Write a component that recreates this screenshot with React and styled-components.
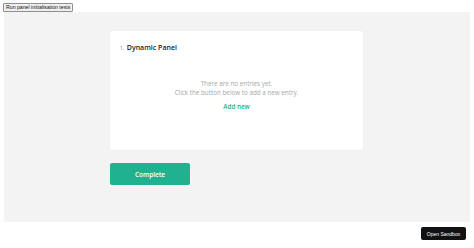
import React from 'react'
import styled, { createGlobalStyle } from 'styled-components'

const GlobalStyle = createGlobalStyle`
    html, body { margin: 0; padding: 0; background: #fff; }
    body { font-family: "Open Sans", "Noto Sans", sans-serif; }
`

const Page = styled.div`
    width: 474px;
    height: 248px;
    padding: 3px 4px 0 4px;
    box-sizing: border-box;
    display: flex;
    flex-direction: column;
`
const TestButton = styled.button`
    align-self: flex-start;
    height: 9px;
    margin: 0 0 0 -1px;
    padding: 0 2px;
    font-family: "Liberation Sans", Arial, sans-serif;
    font-size: 5.2px;
    line-height: 7px;
    color: #111;
    background: #efefef;
    border: 1px solid #8f8f8f;
    border-radius: 1px;
`
const Stage = styled.div`
    width: 466px;
    height: 210px;
    background: #f3f3f3;
    padding: 19px 0 0 106px;
    box-sizing: border-box;
    display: flex;
    flex-direction: column;
    align-items: flex-start;
`
const Card = styled.div`
    width: 253px;
    height: 119px;
    background: #fff;
    border-radius: 2px;
    box-shadow: 0 0 2px rgba(0, 0, 0, 0.06);
    box-sizing: border-box;
    padding: 12px 10px 0 10px;
    display: flex;
    flex-direction: column;
`
const PanelHead = styled.div`
    display: flex;
    align-items: baseline;
    gap: 3px;
`
const Index = styled.span`
    font-size: 4.5px;
    color: #777;
`
const PanelTitle = styled.h3`
    margin: 0;
    font-size: 7px;
    line-height: 9px;
    font-weight: 600;
    color: #222;
`
const Empty = styled.div`
    margin-top: 27px;
    text-align: center;
    font-size: 6.3px;
    line-height: 9px;
    color: #a8a8a8;
    p { margin: 0; }
`
const AddNew = styled.button`
    margin-top: 5px;
    padding: 0;
    background: none;
    border: none;
    font-family: inherit;
    font-size: 6.3px;
    line-height: 9px;
    font-weight: 600;
    color: #20b28e;
`
const Complete = styled.button`
    margin-top: 13px;
    width: 80px;
    height: 22px;
    border: none;
    border-radius: 2px;
    background: #20b28e;
    color: #fff;
    font-family: inherit;
    font-size: 6.5px;
    font-weight: 600;
`
const Footer = styled.div`
    display: flex;
    justify-content: flex-end;
    padding: 5px 4px 0 0;
`
const Sandbox = styled.button`
    width: 45px;
    height: 13px;
    padding: 0;
    border: none;
    border-radius: 2px;
    background: #111;
    color: #fff;
    font-family: "Liberation Sans", Arial, sans-serif;
    font-size: 5px;
`

function App() {
    return (
        <>
            <GlobalStyle />
            <Page>
                <TestButton>Run panel initialisation tests</TestButton>
                <Stage>
                    <Card>
                        <PanelHead>
                            <Index>1.</Index>
                            <PanelTitle>Dynamic Panel</PanelTitle>
                        </PanelHead>
                        <Empty>
                            <p>There are no entries yet.</p>
                            <p>Click the button below to add a new entry.</p>
                            <AddNew>Add new</AddNew>
                        </Empty>
                    </Card>
                    <Complete>Complete</Complete>
                </Stage>
                <Footer>
                    <Sandbox>Open Sandbox</Sandbox>
                </Footer>
            </Page>
        </>
    )
}

export default App
